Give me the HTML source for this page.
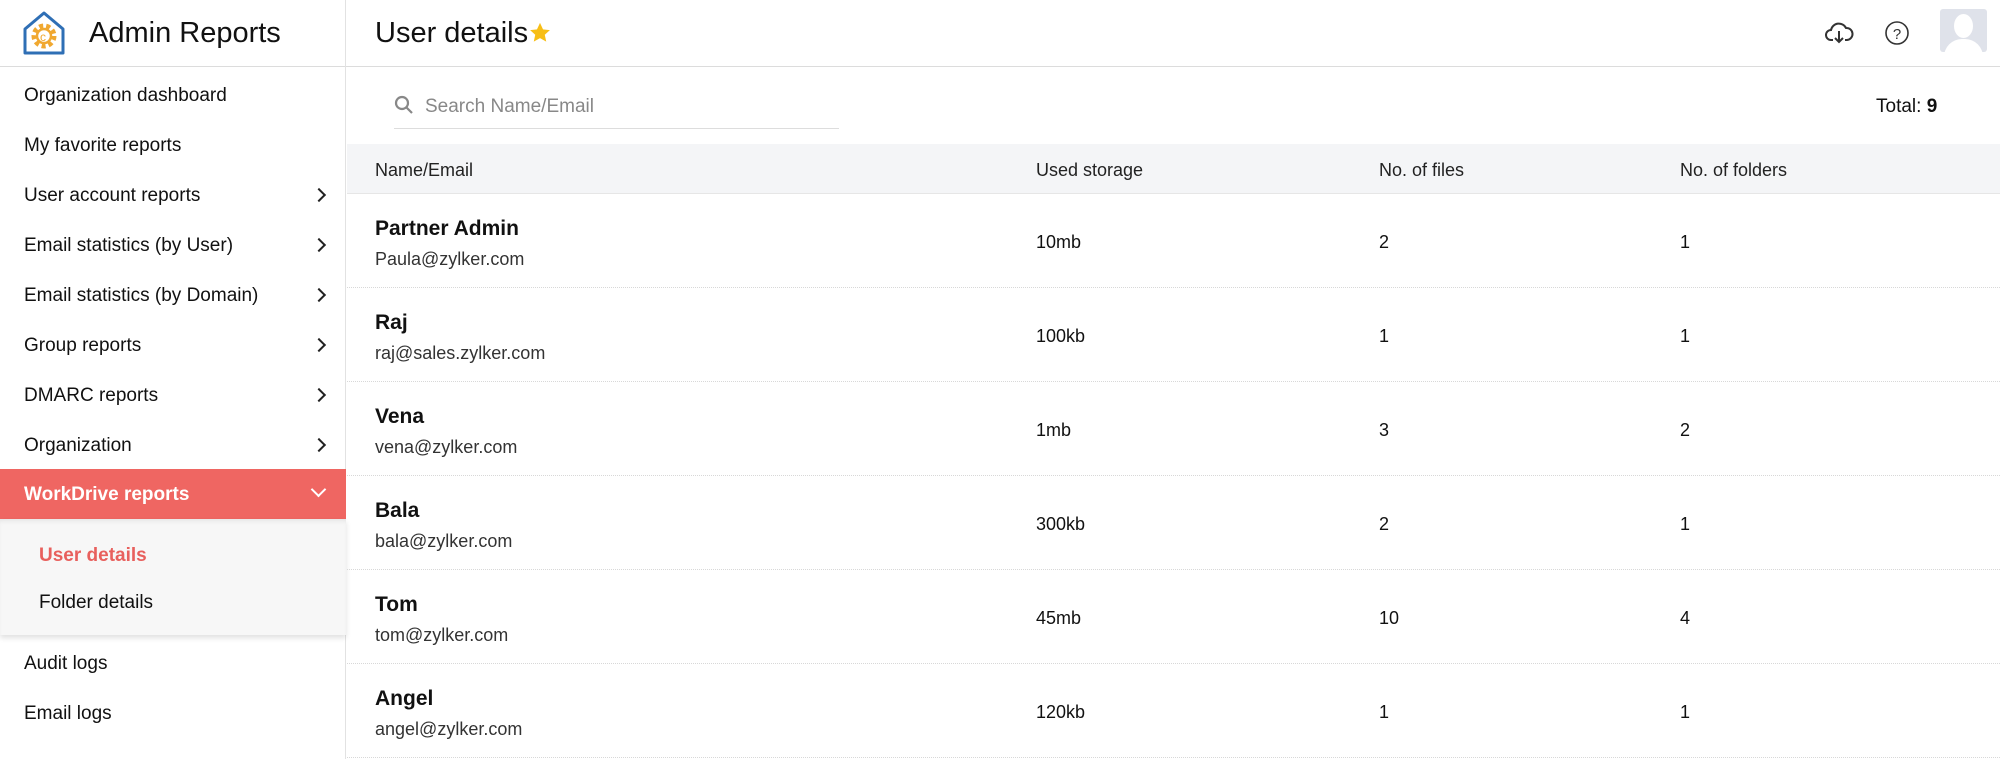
<!DOCTYPE html>
<html><head><meta charset="utf-8"><style>
*{box-sizing:border-box;margin:0;padding:0}
body{width:2000px;height:759px;overflow:hidden;background:#fff;font-family:"Liberation Sans",sans-serif;color:#111;position:relative}
.abs{position:absolute}
.side{left:0;top:0;width:346px;height:759px;border-right:1px solid #e2e2e2}
.hdr{left:0;top:0;width:2000px;height:67px;border-bottom:1px solid #dcdcdc}
.item{position:absolute;left:24px;font-size:19px;line-height:24px;color:#111}
.chev{position:absolute;left:314px;width:10px;height:10px;border-right:2px solid #222;border-top:2px solid #222;transform:rotate(45deg)}
.col{position:absolute;font-size:18px;color:#222}
.row{position:absolute;left:347px;width:1653px;height:94px;border-bottom:1px dotted #d8d8d8}
.nm{position:absolute;left:28px;top:23px;font-size:21px;font-weight:bold}
.em{position:absolute;left:28px;top:55px;font-size:18px;color:#333}
.v{position:absolute;top:38px;font-size:18px}
</style></head><body>
<div class="abs hdr"></div>
<div class="abs side"></div>
<svg class="abs" style="left:20px;top:9px" width="48" height="48" viewBox="0 0 48 48">
<path d="M5 20 L24 4 L43 20 V44 H5 Z" fill="none" stroke="#2f6fb5" stroke-width="3" stroke-linejoin="round"/>
<circle cx="24" cy="27" r="10" fill="none" stroke="#f0a830" stroke-width="5" stroke-dasharray="4 3"/>
<circle cx="24" cy="27" r="7" fill="none" stroke="#f0a830" stroke-width="2.5"/>
<text x="20" y="32" font-size="12" fill="#f0a830" font-family="Liberation Sans">c</text>
</svg>
<div class="abs" style="left:89px;top:17px;font-size:29px">Admin Reports</div>
<div class="abs" style="left:375px;top:17px;font-size:29px">User details</div>
<svg class="abs" style="left:529px;top:22px" width="22" height="22" viewBox="0 0 24 24"><path d="M12 1l3.3 7 7.5.8-5.6 5.1 1.6 7.5L12 17.6 5.2 21.4l1.6-7.5L1.2 8.8l7.5-.8z" fill="#f7be16"/></svg>
<svg class="abs" style="left:1824px;top:19px" width="30" height="28" viewBox="0 0 30 28" fill="none" stroke="#333" stroke-width="2"><path d="M9 21H7a5 5 0 0 1 0-10 8 8 0 0 1 15-2 6 6 0 0 1 1 12h-2"/><path d="M15 12v11M11 19l4 4 4-4"/></svg>
<svg class="abs" style="left:1884px;top:20px" width="26" height="26" viewBox="0 0 26 26"><circle cx="13" cy="13" r="11" fill="none" stroke="#333" stroke-width="1.6"/><text x="13" y="19" text-anchor="middle" font-size="15" fill="#333" font-family="Liberation Sans">?</text></svg>
<div class="abs" style="left:1940px;top:9px;width:47px;height:43px;background:#dfe2ea;overflow:hidden;border-radius:3px">
<div class="abs" style="left:14px;top:5px;width:19px;height:24px;border-radius:50%;background:#fff"></div>
<div class="abs" style="left:4px;top:30px;width:39px;height:24px;border-radius:18px 18px 0 0;background:#fff"></div></div>

<div class="item" style="top:84px">Organization dashboard</div>
<div class="item" style="top:134px">My favorite reports</div>
<div class="item" style="top:184px">User account reports</div><div class="chev" style="top:190px"></div>
<div class="item" style="top:234px">Email statistics (by User)</div><div class="chev" style="top:240px"></div>
<div class="item" style="top:284px">Email statistics (by Domain)</div><div class="chev" style="top:290px"></div>
<div class="item" style="top:334px">Group reports</div><div class="chev" style="top:340px"></div>
<div class="item" style="top:384px">DMARC reports</div><div class="chev" style="top:390px"></div>
<div class="item" style="top:434px">Organization</div><div class="chev" style="top:440px"></div>
<div class="abs" style="left:0;top:469px;width:346px;height:50px;background:#ef6662"></div>
<div class="item" style="top:483px;color:#fff;font-weight:bold">WorkDrive reports</div>
<div class="abs" style="left:313px;top:484px;width:11px;height:11px;border-right:2px solid #fff;border-bottom:2px solid #fff;transform:rotate(45deg)"></div>
<div class="abs" style="left:0;top:519px;width:346px;height:116px;background:#f7f7f7;box-shadow:inset 0 4px 6px -3px rgba(0,0,0,.1),0 3px 5px rgba(0,0,0,.12)"></div>
<div class="item" style="left:39px;top:544px;color:#e8605d;font-weight:bold">User details</div>
<div class="item" style="left:39px;top:591px">Folder details</div>
<div class="item" style="top:652px">Audit logs</div>
<div class="item" style="top:702px">Email logs</div>

<svg class="abs" style="left:394px;top:95px" width="20" height="20" viewBox="0 0 20 20" fill="none" stroke="#888" stroke-width="2.2"><circle cx="8" cy="8" r="6"/><path d="M12.5 12.5L18 18"/></svg>
<div class="abs" style="left:425px;top:96px;font-size:19px;color:#888">Search Name/Email</div>
<div class="abs" style="left:394px;top:128px;width:445px;height:1px;background:#ddd"></div>
<div class="abs" style="left:1876px;top:96px;font-size:19px">Total: <b>9</b></div>

<div class="abs" style="left:347px;top:144px;width:1653px;height:50px;background:#f4f5f7;border-bottom:1px solid #e6e6e6"></div>
<div class="col" style="left:375px;top:160px">Name/Email</div>
<div class="col" style="left:1036px;top:160px">Used storage</div>
<div class="col" style="left:1379px;top:160px">No. of files</div>
<div class="col" style="left:1680px;top:160px">No. of folders</div>

<div class="row" style="top:194px"><div class="nm">Partner Admin</div><div class="em">Paula@zylker.com</div><div class="v" style="left:689px">10mb</div><div class="v" style="left:1032px">2</div><div class="v" style="left:1333px">1</div></div>
<div class="row" style="top:288px"><div class="nm">Raj</div><div class="em">raj@sales.zylker.com</div><div class="v" style="left:689px">100kb</div><div class="v" style="left:1032px">1</div><div class="v" style="left:1333px">1</div></div>
<div class="row" style="top:382px"><div class="nm">Vena</div><div class="em">vena@zylker.com</div><div class="v" style="left:689px">1mb</div><div class="v" style="left:1032px">3</div><div class="v" style="left:1333px">2</div></div>
<div class="row" style="top:476px"><div class="nm">Bala</div><div class="em">bala@zylker.com</div><div class="v" style="left:689px">300kb</div><div class="v" style="left:1032px">2</div><div class="v" style="left:1333px">1</div></div>
<div class="row" style="top:570px"><div class="nm">Tom</div><div class="em">tom@zylker.com</div><div class="v" style="left:689px">45mb</div><div class="v" style="left:1032px">10</div><div class="v" style="left:1333px">4</div></div>
<div class="row" style="top:664px"><div class="nm">Angel</div><div class="em">angel@zylker.com</div><div class="v" style="left:689px">120kb</div><div class="v" style="left:1032px">1</div><div class="v" style="left:1333px">1</div></div>
</body></html>
